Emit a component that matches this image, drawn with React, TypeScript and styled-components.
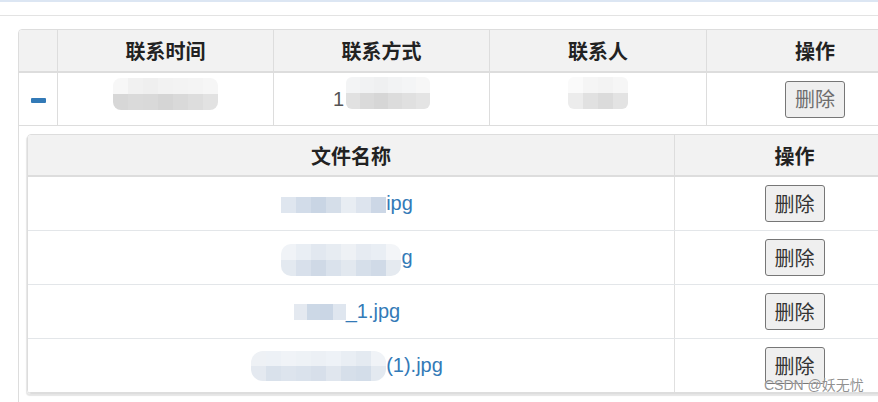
import React from 'react';
import styled, { createGlobalStyle } from 'styled-components';

const Global = createGlobalStyle`
  html, body { margin: 0; padding: 0; background: #fff; overflow: hidden; }
  body { font-family: "Liberation Sans", "Noto Sans CJK SC", sans-serif; color: #333; }
  * { box-sizing: border-box; }
`;

const Page = styled.div`
  position: relative;
  width: 878px;
  height: 402px;
  overflow: hidden;
`;

const TopStripe = styled.div`
  height: 2px;
  background: #dce6f3;
`;

const Divider = styled.div`
  margin-top: 13px;
  height: 1px;
  background: #e3e3e3;
`;

const Content = styled.div`
  padding: 13px 0 0 18px;
`;

const OuterTable = styled.div`
  width: 906px;
  border: 1px solid #ddd;
  border-radius: 4px;
  overflow: hidden;
`;

const OuterRow = styled.div<{ $head?: boolean }>`
  display: grid;
  grid-template-columns: 39px 216px 216px 217px 216px;
  height: ${p => (p.$head ? 43 : 53)}px;
  border-bottom: ${p => (p.$head ? 2 : 1)}px solid #ddd;
  background: ${p => (p.$head ? '#f2f2f2' : '#fff')};
`;

const Cell = styled.div`
  display: flex;
  align-items: center;
  justify-content: center;
  border-right: 1px solid #ddd;
  font-size: 20px;
  &:last-child { border-right: none; }
`;

const HeadCell = styled(Cell)`
  font-weight: 700;
  color: #222;
`;

const MinusIcon = styled.span`
  display: block;
  width: 15px;
  height: 5px;
  margin-top: 3px;
  background: #337ab7;
  border-radius: 1px;
`;

const DetailRow = styled.div`
  padding: 8px 8px 12px 8px;
`;

const NestedTable = styled.div`
  width: 888px;
  border: 1px solid #ddd;
  border-radius: 4px;
  overflow: hidden;
  box-shadow: -1px 2px 1px rgba(0, 0, 0, 0.1);
`;

const NestedRow = styled.div<{ $head?: boolean }>`
  display: grid;
  grid-template-columns: 647px 1fr;
  height: ${p => (p.$head ? 42 : 54)}px;
  border-bottom: ${p => (p.$head ? '2px solid #ddd' : '1px solid #e3e6e9')};
  background: ${p => (p.$head ? '#f2f2f2' : '#fff')};
  &:last-child { border-bottom: 1px solid #ddd; height: 54px; }
`;

const NameCell = styled(Cell)`
  padding-right: 8px;
  border-right-color: #e0e0e0;
`;

const FileLink = styled.a`
  color: #337ab7;
  text-decoration: none;
  font-size: 20px;
  font-family: "Liberation Sans", sans-serif;
`;

const PlainText = styled.span`
  font-size: 20px;
  color: #555;
  margin-right: 2px;
`;

const DeleteButton = styled.button<{ $muted?: boolean }>`
  width: 60px;
  height: 37px;
  padding: 0;
  border: 1px solid #767676;
  border-radius: 3px;
  background: #efefef;
  color: ${p => (p.$muted ? '#6d6d6d' : '#333')};
  font-family: "Noto Sans CJK SC", sans-serif;
  font-size: 20px;
  line-height: 1;
`;

const MosaicGrid = styled.div<{ $cols: number; $tw: number; $th: number; $lift: number; $round: number }>`
  display: grid;
  grid-template-columns: repeat(${p => p.$cols}, ${p => p.$tw}px);
  grid-auto-rows: ${p => p.$th}px;
  margin-bottom: ${p => p.$lift}px;
  border-radius: ${p => p.$round}px;
  overflow: hidden;
  flex: none;
`;

const Tile = styled.span<{ $c: string }>`
  background: ${p => p.$c};
`;

const Watermark = styled.div`
  position: absolute;
  left: 764px;
  top: 377px;
  font-size: 14px;
  line-height: 16px;
  color: rgba(125, 125, 125, 0.85);
  text-shadow: 0 0 1px rgba(255, 255, 255, 0.9);
  white-space: nowrap;
`;

type MosaicProps = { rows: string[][]; tw: number; th: number; lift?: number; round?: number };

const Mosaic = ({ rows, tw, th, lift = 0, round = 0 }: MosaicProps) => (
  <MosaicGrid $cols={rows[0].length} $tw={tw} $th={th} $lift={lift} $round={round}>
    {rows.flat().map((c, i) => (
      <Tile key={i} $c={c} />
    ))}
  </MosaicGrid>
);

const files: { mosaic: MosaicProps; text: string }[] = [
  {
    mosaic: {
      tw: 15,
      th: 16,
      lift: -3,
      rows: [['#dfe6ef', '#d2dce9', '#c9d5e4', '#d5dee9', '#e8edf3', '#dde4ee', '#ccd7e6']],
    },
    text: 'ipg',
  },
  {
    mosaic: {
      tw: 15,
      th: 16,
      lift: -4,
      round: 10,
      rows: [
        ['#f0f3f7', '#e9eef4', '#e2e8f0', '#e7ecf2', '#eef1f5', '#e6ebf2', '#e9eef4', '#f3f5f8'],
        ['#e3e9f0', '#d8e0eb', '#cfd9e6', '#dae2ec', '#e2e8ef', '#d6dfea', '#d0dae7', '#e5eaf0'],
      ],
    },
    text: 'g',
  },
  {
    mosaic: {
      tw: 13,
      th: 16,
      lift: 0,
      rows: [['#e4e9f0', '#ccd8e6', '#cad6e5', '#dfe6ef']],
    },
    text: '_1.jpg',
  },
  {
    mosaic: {
      tw: 15,
      th: 15,
      lift: 0,
      round: 12,
      rows: [
        ['#eef1f5', '#edf1f6', '#f0f3f7', '#eef2f6', '#ecf0f5', '#eef2f7', '#e9eef4', '#e4eaf1', '#f0f3f7'],
        ['#e4e9f0', '#d9e1eb', '#dde4ed', '#dae2ec', '#d7dfea', '#e0e6ee', '#d6dfea', '#d3dde9', '#e3e9f0'],
      ],
    },
    text: '(1).jpg',
  },
];

export default function App() {
  return (
    <Page>
      <Global />
      <TopStripe />
      <Divider />
      <Content>
        <OuterTable>
          <OuterRow $head>
            <HeadCell />
            <HeadCell>联系时间</HeadCell>
            <HeadCell>联系方式</HeadCell>
            <HeadCell>联系人</HeadCell>
            <HeadCell>操作</HeadCell>
          </OuterRow>
          <OuterRow>
            <Cell>
              <MinusIcon />
            </Cell>
            <Cell>
              <Mosaic
                tw={15}
                th={16}
                lift={10}
                round={8}
                rows={[
                  ['#f7f7f7', '#f1f1f1', '#efefef', '#f2f2f2', '#f3f3f3', '#f4f4f4', '#f6f6f6'],
                  ['#d7d7d7', '#dadada', '#d9d9d9', '#d5d5d5', '#d9d9d9', '#dddddd', '#e2e2e2'],
                ]}
              />
            </Cell>
            <Cell>
              <PlainText>1</PlainText>
              <Mosaic
                tw={14}
                th={16}
                lift={12}
                round={6}
                rows={[
                  ['#f3f4f5', '#f1f2f3', '#eff0f1', '#f2f3f4', '#f4f5f6', '#f7f7f7'],
                  ['#e1e1e1', '#dadada', '#d6d6d6', '#dcdcdc', '#e0e0e0', '#e4e4e4'],
                ]}
              />
            </Cell>
            <Cell>
              <Mosaic
                tw={15}
                th={16}
                lift={12}
                round={6}
                rows={[
                  ['#fafafa', '#f5f5f5', '#f3f3f3', '#f6f6f6'],
                  ['#ececec', '#e1e1e1', '#dbdbdb', '#e3e3e3'],
                ]}
              />
            </Cell>
            <Cell>
              <DeleteButton $muted>删除</DeleteButton>
            </Cell>
          </OuterRow>
          <DetailRow>
            <NestedTable>
              <NestedRow $head>
                <HeadCell>文件名称</HeadCell>
                <HeadCell>操作</HeadCell>
              </NestedRow>
              {files.map((f, i) => (
                <NestedRow key={i}>
                  <NameCell>
                    <Mosaic {...f.mosaic} />
                    <FileLink href="#">{f.text}</FileLink>
                  </NameCell>
                  <Cell>
                    <DeleteButton>删除</DeleteButton>
                  </Cell>
                </NestedRow>
              ))}
            </NestedTable>
          </DetailRow>
        </OuterTable>
      </Content>
      <Watermark>CSDN @妖无忧</Watermark>
    </Page>
  );
}
